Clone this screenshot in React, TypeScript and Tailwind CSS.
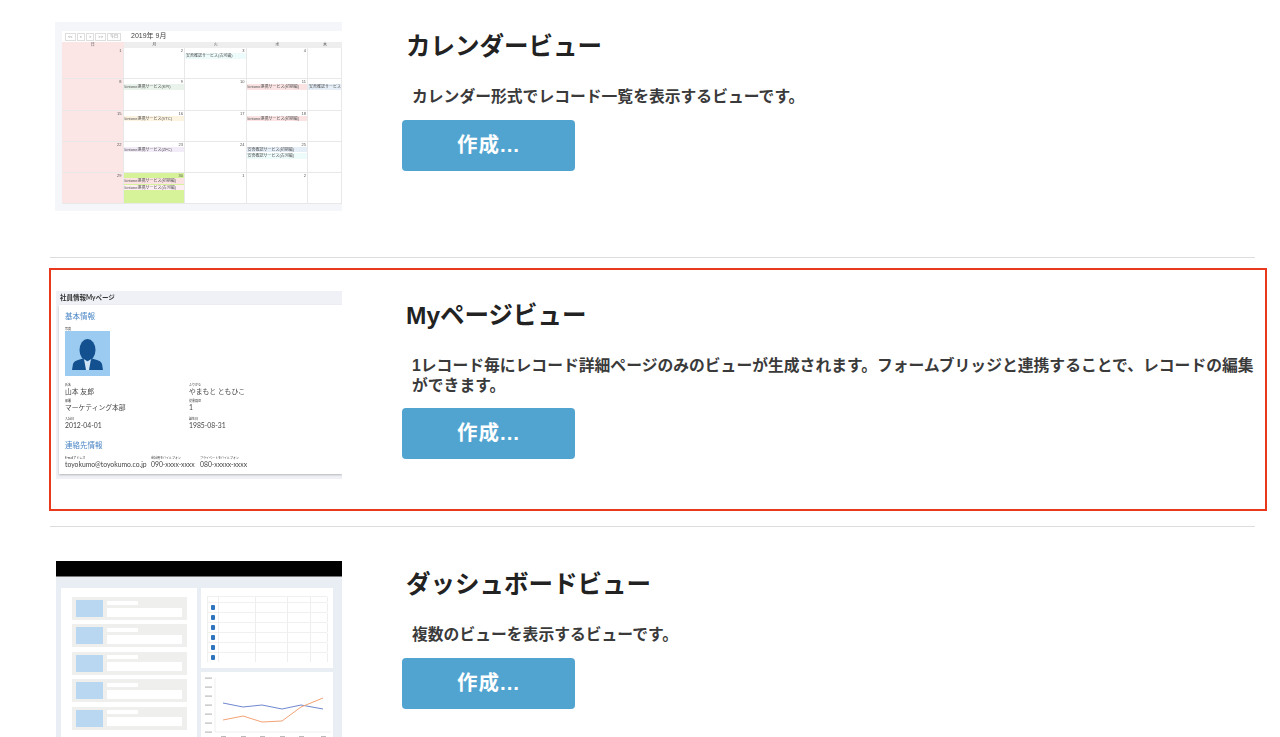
function Calendar() {
  const cols = "grid grid-cols-[61.5px_61.5px_61.5px_61.5px_34px]";
  const events: Record<string, [string, string][]> = {
    "0-2": [["安否確認サービス(古河編)", "bg-[#eefbfb]"]],
    "1-1": [["kintone連携サービス(KPI)", "bg-[#e9f3ec]"]],
    "1-3": [["kintone連携サービス(初期編)", "bg-[#fbe3e3]"]],
    "1-4": [["安否確認サービス(", "bg-[#e6eff8]"]],
    "2-1": [["kintone連携サービス(VTC)", "bg-[#fdf3e1]"]],
    "2-3": [["kintone連携サービス(初期編)", "bg-[#fbe3e3]"]],
    "3-1": [["kintone連携サービス(ZFC)", "bg-[#f2ebf8]"]],
    "3-3": [["安否確認サービス(初期編)", "bg-[#e6eff8]"], ["安否確認サービス(古河編)", "bg-[#eefbfb]"]],
    "4-1": [["kintone連携サービス(初期編)", "bg-[#fbe3e3]"], ["kintone連携サービス(古河編)", "bg-[#fdeef3]"]],
  };
  const days = [
    ["1", "2", "3", "4", ""],
    ["8", "9", "10", "11", ""],
    ["15", "16", "17", "18", ""],
    ["22", "23", "24", "25", ""],
    ["29", "30", "1", "2", ""],
  ];
  return (
    <div className="w-[287px] h-[189px] bg-[#f5f6f9] pl-[7px] pt-[9px] pb-[7px] overflow-hidden shrink-0 blur-[0.6px]">
      <div className="bg-white h-full w-[280px] text-[#555]">
        <div className="h-[11px] flex items-center gap-[1px] pl-[3px] text-[4px]">
          {["<<", "<", ">", ">>", "今日"].map((t) => (
            <span key={t} className="border border-[#ddd] px-[2px] text-[#888]">{t}</span>
          ))}
          <span className="ml-[9px] text-[7px] text-[#444]">2019年 9月</span>
        </div>
        <div className={`${cols} h-[6px] text-[4px] leading-[6px] text-center`}>
          {["日", "月", "火", "水", "木"].map((d, i) => (
            <div key={d} className={i === 0 ? "bg-[#fbe5e5]" : "bg-[#eeeeee]"}>{d}</div>
          ))}
        </div>
        {days.map((row, r) => (
          <div key={r} className={`${cols} h-[31.3px] border-b border-[#e8e8e8]`}>
            {row.map((d, c) => (
              <div
                key={c}
                className={`border-r border-[#e8e8e8] text-[4px] leading-[5px] ${c === 0 ? "bg-[#fbe5e5]" : r === 4 && c === 1 ? "bg-[#d6f39a]" : "bg-white"}`}
              >
                <div className="text-right pr-[1px] h-[5px]">{d}</div>
                {(events[`${r}-${c}`] || []).map(([t, bg]) => (
                  <div key={t} className={`${bg} pl-[1px] mb-[1px] h-[5.5px] whitespace-nowrap overflow-hidden`}>{t}</div>
                ))}
              </div>
            ))}
          </div>
        ))}
      </div>
    </div>
  );
}

function Field({ label, value, w }: { label: string; value: string; w: string }) {
  return (
    <div className={w}>
      <div className="text-[3px] leading-[4px] text-[#333]">{label}</div>
      <div className="text-[6.8px] leading-[8px] text-[#444] whitespace-nowrap">{value}</div>
    </div>
  );
}

function MyPage() {
  return (
    <div className="w-[286px] h-[188px] bg-[#eff1f6] pl-[3px] overflow-hidden shrink-0 blur-[0.5px] ml-[1px] font-['Lato','Noto_Sans_CJK_JP',sans-serif]">
      <div className="h-[14px] flex items-center pl-[1px] text-[6.5px] font-bold text-[#333]">社員情報Myページ</div>
      <div className="bg-white w-[283px] h-[169px] shadow-[0_1px_2px_rgba(0,0,0,0.25)] pl-[6px] pt-[7px]">
        <div className="text-[7.5px] leading-[10px] text-[#4a86c5]">基本情報</div>
        <div className="text-[3px] leading-[4px] mt-[5px] text-[#333]">写真</div>
        <div className="w-[45px] h-[45px] bg-[#9ccbf1]">
          <svg viewBox="0 0 45 45" className="w-full h-full">
            <ellipse cx="22.5" cy="19" rx="8" ry="11" fill="#12508f" />
            <path d="M7 39 L8 33 Q9 30 13 29 L18 27.5 L22.5 33 L27 27.5 L32 29 Q36 30 37 33 L38 39 Z" fill="#12508f" />
            <path d="M19 28 L22.5 31 L26 28 L24 39 L21 39 Z" fill="#cfe3f5" />
          </svg>
        </div>
        <div className="flex mt-[7px]">
          <Field w="w-[124px]" label="氏名" value="山本 友郎" />
          <Field w="w-[124px]" label="ふりがな" value="やまもと ともひこ" />
        </div>
        <div className="flex mt-[4px]">
          <Field w="w-[124px]" label="部署" value="マーケティング本部" />
          <Field w="w-[124px]" label="従業員ID" value="1" />
        </div>
        <div className="flex mt-[6px]">
          <Field w="w-[124px]" label="入社日" value="2012-04-01" />
          <Field w="w-[124px]" label="誕生日" value="1985-08-31" />
        </div>
        <div className="text-[7.5px] leading-[10px] text-[#4a86c5] mt-[12px]">連絡先情報</div>
        <div className="flex mt-[5px]">
          <Field w="w-[86px]" label="E-mailアドレス" value="toyokumo@toyokumo.co.jp" />
          <Field w="w-[49px]" label="会社用モバイルフォン" value="090-xxxx-xxxx" />
          <Field w="w-[60px]" label="プライベートモバイルフォン" value="080-xxxxx-xxxx" />
        </div>
      </div>
    </div>
  );
}

function Dashboard() {
  return (
    <div className="w-[286px] h-[176px] bg-[#e9edf4] overflow-hidden shrink-0 blur-[0.5px] ml-[1px] mt-[1px]">
      <div className="h-[16px] bg-black border-b border-[#777]" />
      <div className="flex gap-[4px] pl-[5px] pt-[11px]">
        <div className="w-[136px] h-[160px] bg-white pl-[11px] pt-[9px] flex flex-col gap-[4.4px]">
          {[0, 1, 2, 3, 4].map((i) => (
            <div key={i} className="w-[115px] h-[23px] bg-[#efefed] flex items-center pl-[4px] gap-[4px]">
              <div className="w-[27px] h-[17px] bg-[#b9d7f1]" />
              <div className="flex flex-col gap-[3px]">
                <div className="w-[31px] h-[4px] bg-white" />
                <div className="w-[75px] h-[9px] bg-white" />
              </div>
            </div>
          ))}
        </div>
        <div className="flex flex-col gap-[4px]">
          <div className="w-[132px] h-[80px] bg-white pl-[6px] pt-[8px]">
            <div className="w-[120px] border-t border-l border-[#f0f0f0]">
              <div className="grid grid-cols-[11px_37px_32px_23px_17px] h-[5px]">
                {[0, 1, 2, 3, 4].map((c) => (
                  <div key={c} className="border-r border-[#eeeeee]" />
                ))}
              </div>
              {[0, 1, 2, 3, 4, 5].map((r) => (
                <div key={r} className="grid grid-cols-[11px_37px_32px_23px_17px] h-[10px] border-t border-[#f0f0f0]">
                  <div className="border-r border-[#eeeeee] flex items-center justify-center">
                    <div className="w-[4px] h-[5px] bg-[#2f74bd] rounded-[1px]" />
                  </div>
                  {[0, 1, 2, 3].map((c) => (
                    <div key={c} className="border-r border-[#eeeeee]" />
                  ))}
                </div>
              ))}
            </div>
          </div>
          <div className="w-[132px] h-[70px] bg-white">
            <svg viewBox="0 0 132 70" className="w-full h-full">
              <path d="M14 6 V60 H130" fill="none" stroke="#ddd" strokeWidth="0.5" />
              {[6, 15, 24, 33, 42, 51, 60].map((y) => (
                <rect key={y} x="4" y={y - 0.5} width="7" height="1.2" fill="#bbb" />
              ))}
              {[22, 42, 61, 81, 100, 122].map((x) => (
                <rect key={x} x={x - 2} y="64" width="5" height="1.5" fill="#bbb" />
              ))}
              <polyline points="22,31 42,35 61,33 81,37 100,33 122,37" fill="none" stroke="#6f88d0" strokeWidth="1" />
              <polyline points="22,48 42,44 61,50 81,49 100,35 122,26" fill="none" stroke="#f3a374" strokeWidth="1" />
            </svg>
          </div>
        </div>
      </div>
    </div>
  );
}

function Info({ title, desc, mt }: { title: string; desc: string; mt: string }) {
  return (
    <div className="flex-1 min-w-0 pl-[60px]">
      <h2 className="h-[49px] leading-[49px] pl-[4px] text-[24.5px] font-bold text-[#222]">{title}</h2>
      <p className="mt-[16px] pl-[10px] pr-[8px] text-[15.8px] leading-[20px] font-bold text-[#3a3a3a]">{desc}</p>
      <button className={`${mt} block w-[173px] h-[51px] rounded-[4px] bg-[#51a4d0] text-white text-[20.5px] tracking-[1px] font-bold`}>作成...</button>
    </div>
  );
}

export default function App() {
  return (
    <div className="h-[737px] overflow-hidden bg-white pl-[49px]">
      <div className="w-[1218px] font-['Liberation_Sans','Noto_Sans_CJK_JP',sans-serif]">
        <div className="flex pt-[22px] pl-[6px] h-[257px]">
          <Calendar />
          <Info
            title="カレンダービュー"
            desc="カレンダー形式でレコード一覧を表示するビューです。"
            mt="mt-[13px]"
          />
        </div>
        <div className="w-[1205px] ml-[1px] border-t border-[#dddddd]" />
        <div className="mt-[10px] h-[243px] border-2 border-[#e8391f] flex pl-[4px] pt-[21px]">
          <MyPage />
          <Info
            title="Myページビュー"
            desc="1レコード毎にレコード詳細ページのみのビューが生成されます。フォームブリッジと連携することで、レコードの編集ができます。"
            mt="mt-[12px]"
          />
        </div>
        <div className="mt-[15px] w-[1205px] ml-[1px] border-t border-[#dddddd]" />
        <div className="flex pt-[33px] pl-[6px]">
          <Dashboard />
          <Info
            title="ダッシュボードビュー"
            desc="複数のビューを表示するビューです。"
            mt="mt-[13px]"
          />
        </div>
      </div>
    </div>
  );
}
